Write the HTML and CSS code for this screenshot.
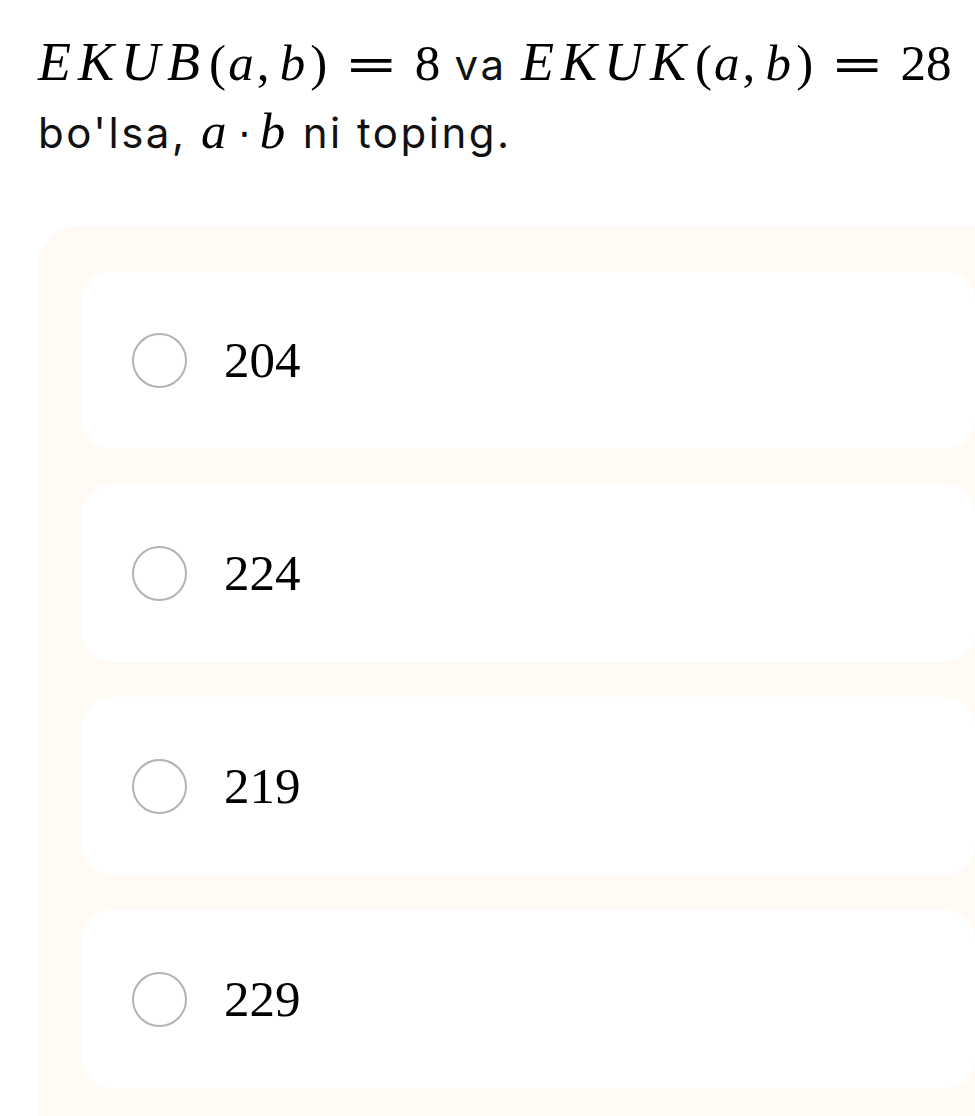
FILE: index.html
```html
<!DOCTYPE html>
<html lang="uz">
<head>
<meta charset="utf-8">
<title>Savol</title>
<link rel="stylesheet" href="styles.css">
</head>
<body>
<main class="page">
  <p class="question">
    <span class="math"><span class="mi caps">EKUB</span><span class="mo">(</span><span class="mi">a</span><span class="punct">,</span><span class="mi">b</span><span class="mo">)</span><span class="rel">=</span><span class="mn">8</span></span> va <span class="math"><span class="mi caps">EKUK</span><span class="mo">(</span><span class="mi">a</span><span class="punct">,</span><span class="mi">b</span><span class="mo">)</span><span class="rel">=</span><span class="mn">28</span></span> bo'lsa, <span class="math lead"><span class="mi">a</span><span class="bin">⋅</span><span class="mi">b</span></span> ni toping.
  </p>

  <section class="panel">
    <label class="option">
      <span class="radio"></span>
      <span class="math answer">204</span>
    </label>
    <label class="option">
      <span class="radio"></span>
      <span class="math answer">224</span>
    </label>
    <label class="option">
      <span class="radio"></span>
      <span class="math answer">219</span>
    </label>
    <label class="option">
      <span class="radio"></span>
      <span class="math answer">229</span>
    </label>
  </section>
</main>
</body>
</html>
```

FILE: styles.css
```css
html, body {
  margin: 0;
  padding: 0;
  background: #ffffff;
  overflow: hidden;
}

body {
  font-family: "Inter", "Open Sans", sans-serif;
  color: #111111;
}

.page {
  padding: 29px 0 0 38px;
  width: 1100px;
}

.question {
  margin: 0;
  width: 930px;
  font-size: 42px;
  line-height: 67px;
  letter-spacing: 0.06em;
}

.math {
  font-family: "Liberation Serif", "Times New Roman", serif;
  font-size: 51px;
  white-space: nowrap;
  letter-spacing: 0;
  color: #000000;
}

.mi {
  font-style: italic;
  letter-spacing: 0.06em;
}

.mi.caps {
  font-size: 54px;
  letter-spacing: 0.13em;
}

.mo {
  font-style: normal;
  margin: 0 0.04em;
}

.punct {
  margin-right: 0.2em;
}

.rel {
  display: inline-block;
  font-family: "DejaVu Sans", sans-serif;
  font-size: 46px;
  transform: scaleX(1.4);
  margin: 0 0.52em 0 0.5em;
}

.bin {
  font-family: "DejaVu Sans", sans-serif;
  font-size: 40px;
  margin: 0 0.22em;
}

.lead {
  margin-left: 0;
}

.panel {
  margin-top: 58px;
  width: 893px;
  padding: 45px 45px 45px 44px;
  background: #fffaf3;
  border-radius: 40px 0 0 0;
  display: flex;
  flex-direction: column;
  gap: 35px;
}

.option {
  height: 178px;
  background: #ffffff;
  border-radius: 30px;
  display: flex;
  align-items: center;
  padding-left: 50px;
  gap: 37px;
}

.radio {
  width: 51px;
  height: 51px;
  border: 2px solid #b3b3b3;
  border-radius: 50%;
  flex: none;
}

.answer {
  line-height: 1;
}
```
